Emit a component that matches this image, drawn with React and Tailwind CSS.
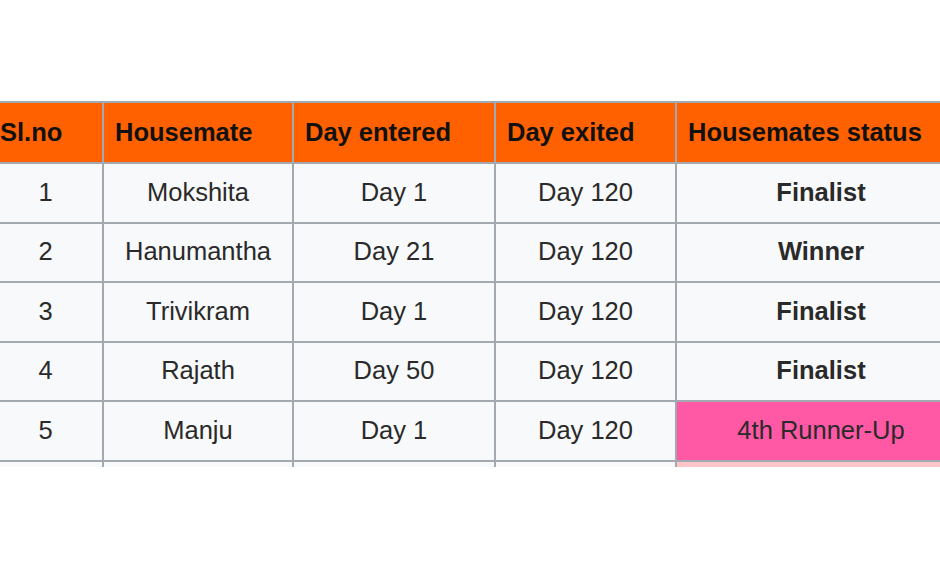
const rows = [
	{ no: 1, name: "Mokshita", entered: "Day 1", exited: "Day 120", status: "Finalist", bold: true },
	{ no: 2, name: "Hanumantha", entered: "Day 21", exited: "Day 120", status: "Winner", bold: true },
	{ no: 3, name: "Trivikram", entered: "Day 1", exited: "Day 120", status: "Finalist", bold: true },
	{ no: 4, name: "Rajath", entered: "Day 50", exited: "Day 120", status: "Finalist", bold: true },
	{ no: 5, name: "Manju", entered: "Day 1", exited: "Day 120", status: "4th Runner-Up", pink: true },
	{ no: 6, name: "", entered: "", exited: "", status: "", light: true },
];

const th = "border-2 border-[#a2a9b1] text-left pl-[11px] font-bold text-[#111]";
const td = "border-2 border-[#a2a9b1] text-center h-[59.6px] p-0 pb-[2px]";

export default function App() {
	return (
		<div className="w-[940px] h-[570px] bg-white overflow-hidden" style={{ fontFamily: '"Liberation Sans", Arial, sans-serif' }}>
			<div className="mt-[101px] h-[366px] w-[940px] overflow-hidden">
				<table className="table-fixed border-collapse w-[978px] min-w-[978px] ml-[-13px] text-[25.5px] text-[#2a2a2a] bg-[#f8f9fa]">
					<colgroup>
						<col className="w-[115px]" />
						<col className="w-[190px]" />
						<col className="w-[202px]" />
						<col className="w-[181px]" />
						<col className="w-[290px]" />
					</colgroup>
					<thead>
						<tr className="bg-[#ff6100] h-[61px]">
							<th className={th}>Sl.no</th>
							<th className={th}>Housemate</th>
							<th className={th}>Day entered</th>
							<th className={th}>Day exited</th>
							<th className={th}>Housemates status</th>
						</tr>
					</thead>
					<tbody>
						{rows.map((r) => (
							<tr key={r.no}>
								<td className={td}>{r.light ? "" : r.no}</td>
								<td className={td}>{r.name}</td>
								<td className={td}>{r.entered}</td>
								<td className={td}>{r.exited}</td>
								<td
									className={
										td +
										(r.pink ? " bg-[#ff58a5]" : "") +
										(r.light ? " bg-[#ffc6c9]" : "") +
										(r.bold ? " font-bold" : "")
									}
								>
									{r.status}
								</td>
							</tr>
						))}
					</tbody>
				</table>
			</div>
		</div>
	);
}
